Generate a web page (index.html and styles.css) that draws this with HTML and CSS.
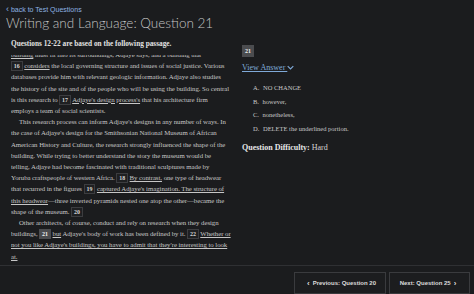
FILE: index.html
```html
<!DOCTYPE html>
<html>
<head>
<meta charset="utf-8">
<link rel="stylesheet" href="styles.css">
</head>
<body>
<div class="page">
  <header class="top">
    <a class="back" href="#"><span class="chev">&#8249;</span> back to Test Questions</a>
    <h1 class="title">Writing and Language: Question 21</h1>
  </header>
  <div class="main">
    <section class="left">
      <p class="intro">Questions 12-22 are based on the following passage.</p>
      <div class="passage">
        <div class="passage-inner">
          <p class="para first"><u>building</u> must fit into its surroundings, Adjaye says, and a building that<br><span class="num">16</span> <u>considers</u> the local governing structure and issues of social justice. Various<br>databases provide him with relevant geologic information. Adjaye also studies<br>the history of the site and of the people who will be using the building. So central<br>is this research to <span class="num">17</span> <u>Adjaye's design process's</u> that his architecture firm<br>employs a team of social scientists.</p>
          <p class="para">This research process can inform Adjaye's designs in any number of ways. In<br>the case of Adjaye's design for the Smithsonian National Museum of African<br>American History and Culture, the research strongly influenced the shape of the<br>building. While trying to better understand the story the museum would be<br>telling, Adjaye had become fascinated with traditional sculptures made by<br>Yoruba craftspeople of western Africa. <span class="num">18</span> <u>By contrast,</u> one type of headwear<br>that recurred in the figures <span class="num">19</span> <u>captured Adjaye's imagination. The structure of<br>this headwear</u>—three inverted pyramids nested one atop the other—became the<br>shape of the museum. <span class="num">20</span></p>
          <p class="para">Other architects, of course, conduct and rely on research when they design<br>buildings, <span class="num active">21</span> <u>but</u> Adjaye's body of work has been defined by it. <span class="num">22</span> <u>Whether or<br>not you like Adjaye's buildings, you have to admit that they're interesting to look<br>at.</u></p>
        </div>
      </div>
    </section>
    <aside class="right">
      <span class="qbadge">21</span>
      <a class="view" href="#">View Answer <svg class="down" viewBox="0 0 10 6" width="7" height="5"><path d="M1 1 L5 5 L9 1" fill="none" stroke="currentColor" stroke-width="1.6"/></svg></a>
      <ol class="options">
        <li><span class="letter">A.</span> NO CHANGE</li>
        <li><span class="letter">B.</span> however,</li>
        <li><span class="letter">C.</span> nonetheless,</li>
        <li><span class="letter">D.</span> DELETE the underlined portion.</li>
      </ol>
      <p class="difficulty"><b>Question Difficulty:</b> Hard</p>
    </aside>
  </div>
  <footer class="foot">
    <a class="btn" href="#"><span class="bchev">&#8249;</span> Previous: Question 20</a>
    <a class="btn" href="#">Next: Question 25 <span class="bchev">&#8250;</span></a>
  </footer>
</div>
</body>
</html>
```

FILE: styles.css
```css
html, body {
  margin: 0;
  padding: 0;
  background: #1b1c1e;
  height: 100%;
  overflow: hidden;
}
.page {
  width: 474px;
  height: 294px;
  display: flex;
  flex-direction: column;
  font-family: "Liberation Serif", serif;
  font-size: 7px;
  color: #cfcfcf;
}
.top {
  padding: 5px 6px 0 6px;
  height: 32px;
  box-sizing: border-box;
}
.back {
  display: block;
  font-family: "Liberation Sans", sans-serif;
  font-size: 7px;
  line-height: 9px;
  color: #8db3e2;
  text-decoration: none;
}
.chev {
  font-size: 9px;
}
.title {
  margin: 1px 0 0 0;
  font-family: "Lato", sans-serif;
  font-weight: 300;
  font-size: 13.5px;
  line-height: 16px;
  color: #c4c4c4;
}
.main {
  display: grid;
  grid-template-columns: 231px 1fr;
  gap: 11px;
  height: 233px;
}
.left {
  padding-left: 11px;
  overflow: hidden;
}
.intro {
  margin: 7px 0 0 0;
  font-weight: bold;
  font-size: 7.3px;
  line-height: 10px;
  color: #e2e2e2;
}
.passage {
  margin-top: 6px;
  height: 209px;
  overflow: hidden;
}
.passage-inner {
  margin-top: -6px;
}
.para {
  margin: 0;
  font-size: 6.8px;
  letter-spacing: -0.04px;
  line-height: 11.2px;
  text-indent: 8px;
  white-space: nowrap;
  color: #c6c6c6;
}
.para.first {
  text-indent: 0;
}
.para u {
  text-decoration-thickness: 0.6px;
  text-underline-offset: 1px;
}
.num {
  display: inline-block;
  text-indent: 0;
  letter-spacing: 0;
  border: 1px solid #3c3d40;
  padding: 0 1.8px;
  line-height: 8px;
  font-size: 6px;
  font-weight: bold;
  color: #d6d6d6;
  background: #1f2022;
}
.num.active {
  background: #4b4c4f;
  border-color: #4b4c4f;
  color: #f0f0f0;
}
.right {
  display: flex;
  flex-direction: column;
  align-items: flex-start;
  padding-top: 13px;
}
.qbadge {
  display: block;
  width: 12px;
  height: 12px;
  line-height: 12px;
  text-align: center;
  background: #4b4c4f;
  color: #f0f0f0;
  font-size: 6px;
  font-weight: bold;
}
.view {
  display: block;
  margin-top: 6px;
  font-size: 8px;
  line-height: 10px;
  color: #7fa9d8;
  text-decoration: underline;
  text-underline-offset: 1px;
}
.down {
  vertical-align: 0px;
}
.options {
  list-style: none;
  margin: 8px 0 0 0;
  padding: 0 0 0 11px;
}
.options li {
  font-size: 6.5px;
  line-height: 13.7px;
  color: #c8c8c8;
}
.letter {
  margin-right: 2px;
}
.difficulty {
  margin: 7px 0 0 0;
  font-size: 8px;
  line-height: 10px;
  color: #d4d4d4;
}
.difficulty b {
  color: #e6e6e6;
}
.foot {
  border-top: 1px solid #2f3033;
  display: flex;
  justify-content: flex-end;
  gap: 3px;
  padding: 6px 4px 0 0;
  flex: 1;
}
.btn {
  display: flex;
  align-items: center;
  justify-content: center;
  box-sizing: border-box;
  height: 22px;
  border: 1px solid #3a3b3e;
  background: #1c1d1f;
  font-family: "Liberation Sans", sans-serif;
  font-weight: bold;
  font-size: 6px;
  color: #dcdcdc;
  text-decoration: none;
}
.btn:first-child {
  width: 92px;
}
.btn:last-child {
  width: 81px;
}
.bchev {
  font-size: 8px;
  margin: 0 3px;
}
```
